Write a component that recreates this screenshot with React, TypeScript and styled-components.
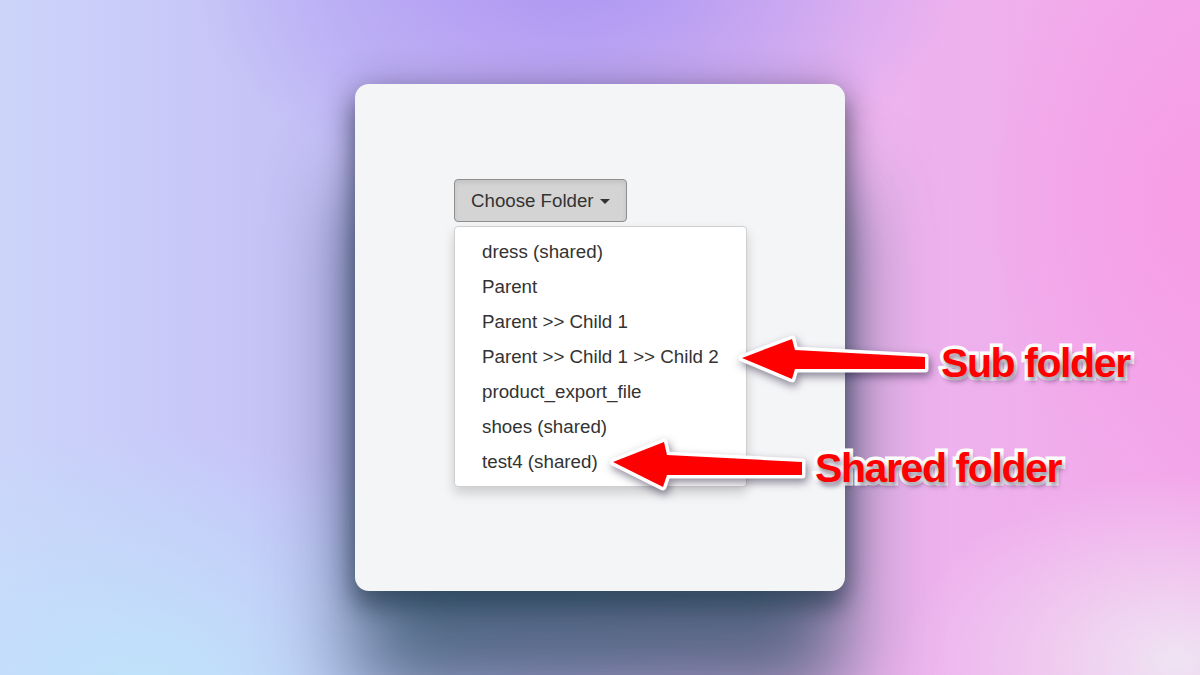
import React from "react";
import styled, { createGlobalStyle } from "styled-components";

const GlobalStyle = createGlobalStyle`
  html, body {
    margin: 0;
    padding: 0;
    width: 1200px;
    height: 675px;
    overflow: hidden;
  }
  body {
    font-family: "Liberation Sans", Arial, sans-serif;
  }
`;

const Stage = styled.div`
  position: relative;
  width: 1200px;
  height: 675px;
  display: flex;
  align-items: center;
  justify-content: center;
  background:
    radial-gradient(ellipse 520px 300px at 48% -4%, #ad96f3 0%, rgba(173, 150, 243, 0) 75%),
    radial-gradient(ellipse 520px 380px at 12% 104%, #bfe4fb 0%, rgba(191, 228, 251, 0) 72%),
    radial-gradient(ellipse 380px 260px at 98% 98%, #efe4f3 0%, rgba(239, 228, 243, 0) 72%),
    radial-gradient(ellipse 300px 400px at 100% 30%, #f79de6 0%, rgba(247, 157, 230, 0) 75%),
    linear-gradient(90deg, #ccd4fa 0%, #c4bdf6 30%, #cdb8f1 48%, #ecb5ef 72%, #f3a7ea 100%);
`;

const Card = styled.div`
  width: 490px;
  height: 507px;
  box-sizing: border-box;
  padding: 95px 0 0 99px;
  background: #f4f5f7;
  border-radius: 14px;
  box-shadow:
    0 105px 85px rgba(38, 72, 92, 0.74),
    0 16px 24px rgba(15, 30, 40, 0.55),
    0 0 36px rgba(40, 30, 70, 0.3);
`;

const Dropdown = styled.div`
  position: relative;
  display: inline-block;
`;

const ToggleButton = styled.button`
  display: inline-flex;
  align-items: center;
  gap: 6px;
  height: 43px;
  box-sizing: border-box;
  padding: 0 16px 0 16px;
  background: #d4d4d4;
  border: 1px solid #8f8f8f;
  border-radius: 4px;
  color: #333;
  font-family: "Liberation Sans", Arial, sans-serif;
  font-size: 18.7px;
  box-shadow: inset 0 3px 5px rgba(0, 0, 0, 0.08);
`;

const Caret = styled.span`
  display: inline-block;
  width: 0;
  height: 0;
  border-top: 5px solid #333;
  border-left: 5px solid transparent;
  border-right: 5px solid transparent;
  margin-top: 2px;
`;

const Menu = styled.ul`
  position: absolute;
  top: calc(100% + 4px);
  left: 0;
  width: 293px;
  box-sizing: border-box;
  margin: 0;
  padding: 7px 0;
  list-style: none;
  background: #fff;
  border: 1px solid #cfcfcf;
  border-radius: 4px;
  box-shadow: 0 6px 12px rgba(0, 0, 0, 0.17);
`;

const MenuItem = styled.li`
  padding: 0 27px;
  line-height: 35px;
  height: 35px;
  font-size: 18.75px;
  color: #333;
  white-space: nowrap;
`;

const Overlay = styled.svg`
  position: absolute;
  left: 0;
  top: 0;
  width: 1200px;
  height: 675px;
  pointer-events: none;
  overflow: visible;
`;

const Label = styled.div<{ $x: number; $y: number }>`
  position: absolute;
  left: ${(p) => p.$x}px;
  top: ${(p) => p.$y}px;
  font-family: "Liberation Sans", Arial, sans-serif;
  font-weight: 700;
  font-size: 41px;
  line-height: 40px;
  letter-spacing: -1.4px;
  color: #ff0000;
  -webkit-text-stroke: 7px #ffffff;
  paint-order: stroke fill;
  text-shadow: 2px 4px 5px rgba(40, 20, 60, 0.55);
  white-space: nowrap;
`;

const items = [
  "dress (shared)",
  "Parent",
  "Parent >> Child 1",
  "Parent >> Child 1 >> Child 2",
  "product_export_file",
  "shoes (shared)",
  "test4 (shared)",
];

const Arrow = ({ points }: { points: string }) => (
  <g style={{ filter: "drop-shadow(2px 4px 4px rgba(30,20,50,0.5))" }}>
    <polygon
      points={points}
      fill="#ff0000"
      stroke="#ffffff"
      strokeWidth={7}
      strokeLinejoin="round"
    />
    <polygon points={points} fill="#ff0000" />
  </g>
);

export default function App() {
  return (
    <>
      <GlobalStyle />
      <Stage>
        <Card>
          <Dropdown>
            <ToggleButton>
              Choose Folder
              <Caret />
            </ToggleButton>
            <Menu>
              {items.map((t) => (
                <MenuItem key={t}>{t}</MenuItem>
              ))}
            </Menu>
          </Dropdown>
        </Card>
        <Overlay viewBox="0 0 1200 675">
          <Arrow points="742,358 792,339 795,350 925,357 925,369 795,369 792,379" />
          <Arrow points="613,462 664,442 667,455 802,462 802,475 667,475 663,487" />
        </Overlay>
        <Label $x={941} $y={343}>Sub folder</Label>
        <Label $x={815} $y={448}>Shared folder</Label>
      </Stage>
    </>
  );
}
